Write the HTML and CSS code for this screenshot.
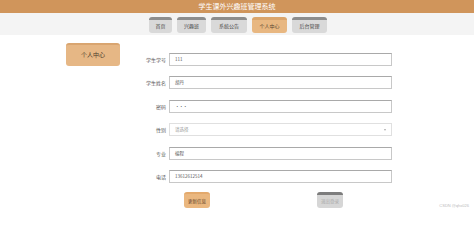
FILE: index.html
```html
<!DOCTYPE html>
<html lang="zh">
<head>
<meta charset="utf-8">
<title>学生课外兴趣班管理系统</title>
<link rel="stylesheet" href="styles.css">
</head>
<body>
<header class="top">学生课外兴趣班管理系统</header>
<nav class="nav">
  <a class="nav-btn w23">首页</a>
  <a class="nav-btn w29">兴趣班</a>
  <a class="nav-btn w36">系统公告</a>
  <a class="nav-btn w35 active">个人中心</a>
  <a class="nav-btn w35">后台管理</a>
</nav>
<main class="main">
  <aside class="side">
    <div class="side-tab">个人中心</div>
  </aside>
  <form class="form">
    <label class="lbl">学生学号</label>
    <div class="field">111</div>
    <label class="lbl">学生姓名</label>
    <div class="field">胡丹</div>
    <label class="lbl">密码</label>
    <div class="field pw">•••</div>
    <label class="lbl">性别</label>
    <div class="field select"><span class="ph">请选择</span><span class="caret"></span></div>
    <label class="lbl">专业</label>
    <div class="field">编程</div>
    <label class="lbl">电话</label>
    <div class="field">13612612514</div>
    <div class="actions">
      <button type="button" class="btn btn-primary">更新信息</button>
      <button type="button" class="btn btn-gray">退出登录</button>
    </div>
  </form>
</main>
<div class="watermark">CSDN @qhx026</div>
</body>
</html>
```
FILE: styles.css
```css
* { box-sizing: border-box; }
html, body { margin: 0; padding: 0; }
body {
  width: 474px;
  height: 214px;
  background: #ffffff;
  font-family: "Noto Sans CJK SC", "Noto Sans", sans-serif;
  color: #444;
  position: relative;
  overflow: hidden;
}
.top {
  height: 13px;
  background: #d0955b;
  color: #fff;
  font-size: 7px;
  line-height: 13px;
  text-align: center;
}
.nav {
  height: 22px;
  background: #f4f4f4;
  display: flex;
  justify-content: center;
  align-items: flex-start;
  gap: 5px;
  padding-top: 4px;
  padding-left: 2px;
}
.nav-btn {
  height: 16px;
  background: #d9d9d9;
  border-top: 3px solid #8d8d8d;
  border-radius: 3px;
  font-size: 5px;
  line-height: 12px;
  text-align: center;
  color: #444;
}
.nav-btn.active {
  background: #e8b781;
  border-top-color: #dba56c;
  color: #5a4530;
}
.w23 { width: 23px; }
.w29 { width: 29px; }
.w36 { width: 36px; }
.w35 { width: 35px; }
.main {
  display: flex;
  align-items: flex-start;
  padding-left: 66px;
  padding-top: 8px;
}
.side {
  width: 54px;
}
.side-tab {
  height: 23px;
  background: #e6b785;
  border-top: 2px solid #d9a570;
  border-radius: 3px;
  font-size: 6px;
  line-height: 20px;
  text-align: center;
  color: #4a3a2a;
}
.form {
  margin-left: 10px;
  margin-top: 10px;
  display: grid;
  grid-template-columns: 36px 223px;
  grid-auto-rows: 13px;
  column-gap: 3px;
  row-gap: 10.4px;
  align-items: center;
}
.lbl {
  text-align: right;
  font-size: 5px;
  line-height: 13px;
  color: #555;
}
.field {
  height: 13px;
  border: 1px solid #c8c8c8;
  border-top-color: #a9a9a9;
  background: #fff;
  font-size: 4.5px;
  line-height: 11px;
  padding-left: 5px;
  color: #555;
}
.pw { letter-spacing: -0.5px; }
.select {
  display: flex;
  justify-content: space-between;
  align-items: center;
  border-color: #e0e0e0;
  padding-right: 5px;
}
.ph { color: #999; }
.caret {
  width: 0;
  height: 0;
  border-left: 1.5px solid transparent;
  border-right: 1.5px solid transparent;
  border-top: 2px solid #aaa;
}
.actions {
  grid-column: 2;
  display: flex;
  align-items: flex-start;
  padding-left: 15px;
  gap: 107px;
  height: 16px;
}
.btn {
  width: 26px;
  height: 16px;
  border: none;
  border-radius: 3px;
  font-family: inherit;
  font-size: 4.5px;
  padding: 0;
}
.btn-primary {
  background: #eab77f;
  border-top: 2px solid #e3a96c;
  color: #5a4028;
}
.btn-gray {
  background: #d6d6d6;
  border-top: 3px solid #7d7d7d;
  color: #aaa;
}
.watermark {
  position: absolute;
  right: 5px;
  bottom: 6px;
  font-family: "Liberation Sans", sans-serif;
  font-size: 4px;
  color: #bbb;
}
```
